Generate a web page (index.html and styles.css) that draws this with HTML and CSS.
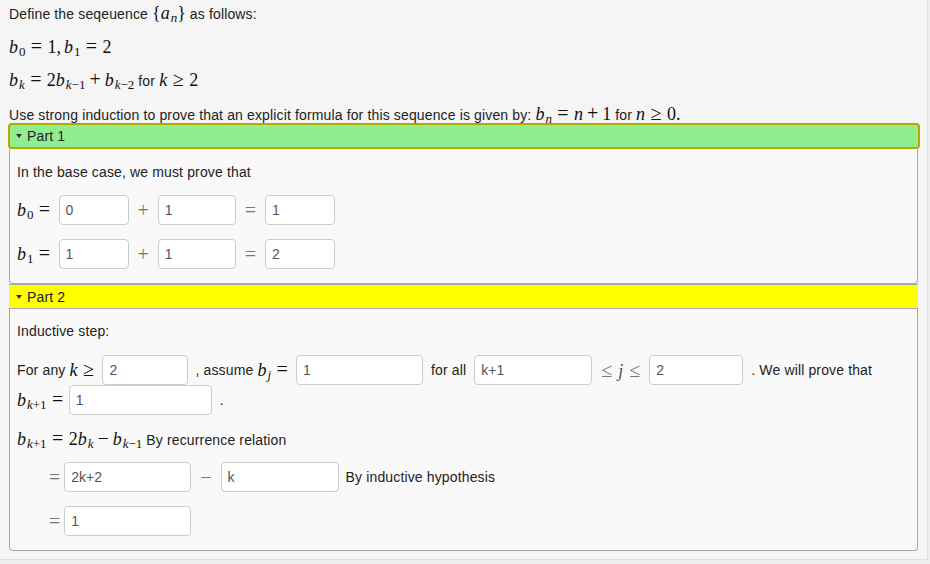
FILE: index.html
```html
<!DOCTYPE html>
<html>
<head>
<meta charset="utf-8">
<link rel="stylesheet" href="styles.css">
</head>
<body>
<div class="page">
  <div class="intro">
    <p>Define the seqeuence <span class="m">{<i>a</i><sub><i>n</i></sub>}</span> as follows:</p>
    <p class="ml"><span class="m"><i>b</i><sub>0</sub><span class="rel">=</span>1,<span class="thin"></span><i>b</i><sub>1</sub><span class="rel">=</span>2</span></p>
    <p class="ml gap14"><span class="m"><i>b</i><sub><i>k</i></sub><span class="rel">=</span>2<i>b</i><sub><i>k</i>−1</sub><span class="bin">+</span><i>b</i><sub><i>k</i>−2</sub></span> for <span class="m"><i>k</i><span class="rel">≥</span>2</span></p>
    <p>Use strong induction to prove that an explicit formula for this sequence is given by: <span class="m"><i>b</i><sub><i>n</i></sub><span class="rel">=</span><i>n</i><span class="bin">+</span>1</span> for <span class="m"><i>n</i><span class="rel">≥</span>0.</span></p>
  </div>

  <div class="part">
    <div class="part-head head-green"><span class="caret"></span>Part 1</div>
    <div class="part-body body-1">
      <p class="line">In the base case, we must prove that</p>
      <div class="row r-first">
        <span class="m"><i>b</i><sub>0</sub><span class="rel">=</span></span>
        <input class="box w70 gap-l" type="text" value="0">
        <span class="op">+</span>
        <input class="box w78" type="text" value="1">
        <span class="op">=</span>
        <input class="box w70" type="text" value="1">
      </div>
      <div class="row r-next">
        <span class="m"><i>b</i><sub>1</sub><span class="rel">=</span></span>
        <input class="box w70 gap-l" type="text" value="1">
        <span class="op">+</span>
        <input class="box w78" type="text" value="1">
        <span class="op">=</span>
        <input class="box w70" type="text" value="2">
      </div>
    </div>
  </div>

  <div class="part">
    <div class="part-head head-yellow"><span class="caret"></span>Part 2</div>
    <div class="part-body body-2">
      <p class="line">Inductive step:</p>
      <div class="row r-first">
        <span>For any&nbsp;</span><span class="m"><i>k</i><span class="rel">≥</span></span>
        <input class="box w86 gap-l" type="text" value="2">
        <span class="txt-l">, assume&nbsp;</span><span class="m"><i>b</i><sub><i>j</i></sub><span class="rel">=</span></span>
        <input class="box w127 gap-l" type="text" value="1">
        <span class="txt">for all</span>
        <input class="box w118" type="text" value="k+1">
        <span class="op"><span class="gl">≤</span><i>j</i><span class="gl">≤</span></span>
        <input class="box w94" type="text" value="2">
        <span class="txt">. We will prove that</span>
      </div>
      <div class="row">
        <span class="m"><i>b</i><sub><i>k</i>+1</sub><span class="rel">=</span></span>
        <input class="box w143" type="text" value="1">
        <span class="txt">.</span>
      </div>
      <p class="line rec"><span class="m"><i>b</i><sub><i>k</i>+1</sub><span class="rel">=</span>2<i>b</i><sub><i>k</i></sub><span class="bin">−</span><i>b</i><sub><i>k</i>−1</sub></span> By recurrence relation</p>
      <div class="row r-next indent">
        <span class="op eq">=</span>
        <input class="box w127" type="text" value="2k+2">
        <span class="op">−</span>
        <input class="box w118" type="text" value="k">
        <span class="txt-l">By inductive hypothesis</span>
      </div>
      <div class="row r-next indent">
        <span class="op eq">=</span>
        <input class="box w127" type="text" value="1">
      </div>
    </div>
  </div>
</div>
</body>
</html>
```

FILE: styles.css
```css
* { box-sizing: border-box; }
html, body { margin: 0; padding: 0; }
body {
  background: #eeeeee;
  font-family: "Liberation Sans", Arial, sans-serif;
  font-size: 14px;
  letter-spacing: 0.14px;
  color: #222;
}
.page {
  width: 928px;
  height: 560px;
  padding: 3px 0 0 9px;
  background: #f5f5f5;
  border-right: 1px solid #e0e0e0;
  border-bottom: 1px solid #e0e0e0;
}
.intro p {
  margin: 0 0 13px 0;
  line-height: 20px;
  height: 20px;
  white-space: nowrap;
}
.intro p.gap14 { margin-bottom: 14px; }
.intro p:last-child { margin-bottom: 0; }

.m {
  font-family: "Liberation Serif", "DejaVu Serif", serif;
  font-size: 18px;
  letter-spacing: 0;
  color: #111;
}
.m i { font-style: italic; }
.m sub {
  font-size: 13px;
  vertical-align: -3px;
  line-height: 0;
  margin-left: 1px;
}
.rel {
  display: inline-block;
  width: 12px;
  text-align: center;
  margin: 0 5px;
  font-style: normal;
  font-size: 20px;
  line-height: 20px;
}
.bin { margin: 0 4px; font-style: normal; font-size: 20px; }
.thin { display: inline-block; width: 3px; }

.part { width: 909px; }
.part-head {
  display: flex;
  align-items: center;
  font-size: 14px;
  color: #222;
}
.caret {
  width: 0;
  height: 0;
  border-left: 3.5px solid transparent;
  border-right: 3.5px solid transparent;
  border-top: 4px solid #333;
  margin-right: 5px;
}
.head-green {
  height: 26px;
  margin: 0 -2px 0 -1px;
  padding-left: 6px;
  background: #90ee90;
  border: 2px solid #b5a900;
  border-radius: 4px;
}
.head-yellow {
  height: 25px;
  padding-left: 7px;
  background: #ffff00;
  border-top: 1px solid #aaaaaa;
  border-bottom: 1px solid #aaaaaa;
}
.part-body {
  background: #f9f9f9;
  border: 1px solid #a8a8a8;
  border-top: none;
  border-radius: 0 0 4px 4px;
  padding: 13px 8px 14px 7px;
}
.body-2 { padding-top: 12px; }

.line {
  margin: 0;
  line-height: 20px;
  height: 20px;
  white-space: nowrap;
}
.row {
  display: flex;
  align-items: center;
  height: 30px;
  white-space: nowrap;
}
.r-first { margin-top: 13px; }
.r-next { margin-top: 14px; }
.body-2 .r-first { margin-top: 14px; }
.rec { margin-top: 13px; }
.indent { padding-left: 32px; }

.box {
  height: 30px;
  border: 1px solid #cccccc;
  border-radius: 4px;
  background: #ffffff;
  padding: 0 6px;
  font-family: "Liberation Sans", Arial, sans-serif;
  font-size: 14px;
  letter-spacing: 0;
  color: #555;
  outline: none;
}
.box.gap-l { margin-left: 3px; }
.w70 { width: 70px; }
.w78 { width: 78px; }
.w86 { width: 86px; }
.w94 { width: 94px; }
.w118 { width: 118px; }
.w127 { width: 127px; }
.w143 { width: 143px; }

.op {
  font-family: "Liberation Serif", "DejaVu Serif", serif;
  font-size: 20px;
  letter-spacing: 0;
  color: #777;
  margin: 0 9px;
}
.op.eq { margin: 0 4px 0 0; }
.op i { color: #555; font-size: 18px; margin: 0 6px; }
.txt { margin: 0 8px; color: #222; }
.txt-l { margin-left: 7px; color: #222; }
```
